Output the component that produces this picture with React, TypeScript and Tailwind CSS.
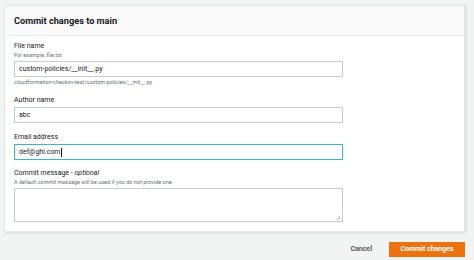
import React from "react";

const font = { fontFamily: 'Roboto, "Noto Sans", Arial, sans-serif' };

function Label({ children }: { children: React.ReactNode }) {
  return <div className="text-[7px] leading-[10px] text-[#16191f]">{children}</div>;
}

function Desc({ children }: { children: React.ReactNode }) {
  return <div className="text-[5.5px] leading-[8px] text-[#687078]">{children}</div>;
}

function Input({ value, focused }: { value: string; focused?: boolean }) {
  return (
    <div
      className={
        "mt-[2px] h-[16px] w-[329px] flex items-center px-[4px] text-[7px] text-[#16191f] bg-white " +
        (focused ? "border border-[#3fb1cf]" : "border border-[#c9cccf]")
      }
    >
      <span>{value}</span>
      {focused && <span className="ml-[0.5px] w-[0.8px] h-[9px] bg-[#16191f]" />}
    </div>
  );
}

export default function App() {
  return (
    <div style={font} className="w-[474px] h-[260px] bg-[#f2f3f3] pt-[5px] pl-[4px] overflow-hidden">
      <div className="w-[461px] bg-white border border-[#e3e5e6] shadow-[1px_1px_2px_rgba(0,0,0,0.12)]">
        <div className="h-[30px] bg-[#fafafa] border-b border-[#eaeded] flex items-center px-[9px]">
          <span className="text-[9.2px] font-bold text-[#16191f]">Commit changes to main</span>
        </div>
        <div className="px-[9px] pt-[5px] pb-[9px]">
          <Label>File name</Label>
          <Desc>For example, file.txt</Desc>
          <Input value="custom-policies/__init__.py" />
          <div className="mt-[1px]">
            <Desc>cloudformation-checkov-test/custom-policies/__init__.py</Desc>
          </div>

          <div className="mt-[9px]">
            <Label>Author name</Label>
            <Input value="abc" />
          </div>

          <div className="mt-[9px]">
            <Label>Email address</Label>
            <Input value="def@ghi.com" focused />
          </div>

          <div className="mt-[8px]">
            <Label>
              Commit message - <i>optional</i>
            </Label>
            <Desc>A default commit message will be used if you do not provide one.</Desc>
            <div className="mt-[2px] relative h-[34px] w-[329px] border border-[#c9cccf] bg-white">
              <svg className="absolute right-[1px] bottom-[1px]" width="5" height="5" viewBox="0 0 5 5">
                <line x1="0.5" y1="4.5" x2="4.5" y2="0.5" stroke="#9a9a9a" strokeWidth="0.6" />
                <line x1="2.5" y1="4.5" x2="4.5" y2="2.5" stroke="#9a9a9a" strokeWidth="0.6" />
              </svg>
            </div>
          </div>
        </div>
      </div>
      <div className="w-[461px] mt-[10px] flex justify-end items-center gap-[17px]">
        <span className="text-[7px] font-bold text-[#545b64]">Cancel</span>
        <div className="h-[15px] w-[76px] bg-[#ec7211] flex items-center justify-center text-[7px] font-bold text-white">
          Commit changes
        </div>
      </div>
    </div>
  );
}
